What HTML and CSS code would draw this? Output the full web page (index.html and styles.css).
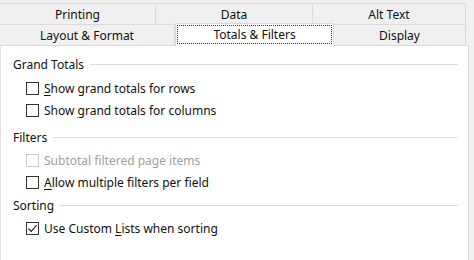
FILE: index.html
```html
<!DOCTYPE html>
<html>
<head>
<meta charset="utf-8">
<link rel="stylesheet" href="styles.css">
</head>
<body>
<div class="dialog">
  <div class="tabs">
    <div class="tab-row">
      <div class="tab w-print">Printing</div>
      <div class="tab w-data">Data</div>
      <div class="tab w-alt">Alt Text</div>
    </div>
    <div class="tab-row">
      <div class="tab w-layout">Layout &amp; Format</div>
      <div class="tab tab-active w-totals"><span class="focus">Totals &amp; Filters</span></div>
      <div class="tab w-display">Display</div>
    </div>
  </div>
  <div class="panel">
    <div class="group-head g1"><span class="group-label">Grand Totals</span><span class="group-line"></span></div>
    <div class="opt first f1"><span class="box"></span><span class="opt-text"><u>S</u>how grand totals for rows</span></div>
    <div class="opt"><span class="box"></span><span class="opt-text">Show <u>g</u>rand totals for columns</span></div>

    <div class="group-head g2"><span class="group-label">Filters</span><span class="group-line"></span></div>
    <div class="opt first disabled"><span class="box"></span><span class="opt-text">Subtotal filtered page items</span></div>
    <div class="opt"><span class="box"></span><span class="opt-text"><u>A</u>llow multiple filters per field</span></div>

    <div class="group-head g3"><span class="group-label">Sorting</span><span class="group-line"></span></div>
    <div class="opt first"><span class="box checked"><svg width="11" height="11" viewBox="0 0 11 11"><path d="M1.5 5.5 L4.2 8.3 L9.6 2.2" fill="none" stroke="#222" stroke-width="1.2"/></svg></span><span class="opt-text">Use Custom <u>L</u>ists when sorting</span></div>
  </div>
</div>
</body>
</html>
```

FILE: styles.css
```css
html, body {
  margin: 0;
  padding: 0;
}
body {
  width: 474px;
  height: 260px;
  overflow: hidden;
  background: #f0f0f0;
  font-family: "Noto Sans", "Open Sans", "Liberation Sans", sans-serif;
  font-size: 12px;
  color: #111111;
}
.dialog {
  width: 474px;
  height: 260px;
  display: flex;
  flex-direction: column;
}
.tabs {
  padding-top: 3px;
  position: relative;
  z-index: 2;
}
.tab-row {
  display: flex;
  height: 21px;
}
.tab {
  box-sizing: border-box;
  height: 21px;
  border-top: 1px solid #dadada;
  border-right: 1px solid #dadada;
  background: #f0f0f0;
  display: flex;
  align-items: center;
  justify-content: center;
  line-height: 1;
  padding-top: 1px;
}
.w-print { width: 156px; }
.w-data { width: 157px; }
.w-alt { width: 153px; }
.w-layout { width: 175px; }
.w-totals { width: 159px; }
.w-display { width: 132px; }
.tab-active {
  background: #ffffff;
  height: 23px;
  margin-top: -1px;
  border-left: 1px solid #dadada;
  border-top: 1px solid #dadada;
  border-right: 1px solid #dadada;
  padding: 1px 1px 2px 1px;
  position: relative;
  z-index: 3;
}
.focus {
  box-sizing: border-box;
  width: 100%;
  height: 100%;
  border: 1px dotted #333;
  display: flex;
  align-items: center;
  justify-content: center;
  padding-top: 1px;
}
.panel {
  flex: 1;
  margin-right: 5px;
  background: #ffffff;
  border-top: 1px solid #dadada;
  border-left: 1px solid #e2e2e2;
  border-right: 1px solid #dadada;
  box-sizing: border-box;
  padding: 8px 10px 0 12px;
}
.group-head {
  display: flex;
  align-items: center;
  height: 20px;
  gap: 6px;
}
.group-line {
  flex: 1;
  height: 1px;
  background: #dcdcdc;
  margin-top: 1px;
}
.g2 { margin-top: 6px; }
.g3 { margin-top: 2px; }
.opt {
  display: flex;
  align-items: center;
  height: 22px;
  padding-left: 13px;
}
.opt.first { margin-top: 2px; }
.opt.f1 { margin-top: 3px; }
.box {
  box-sizing: border-box;
  width: 13px;
  height: 13px;
  border: 1px solid #333333;
  background: #ffffff;
  margin-right: 5px;
  display: flex;
  align-items: center;
  justify-content: center;
}
.opt-text u {
  text-decoration: underline;
  text-underline-offset: 2px;
}
.disabled .box {
  border-color: #cccccc;
}
.disabled .opt-text {
  color: #a0a0a0;
}
```
